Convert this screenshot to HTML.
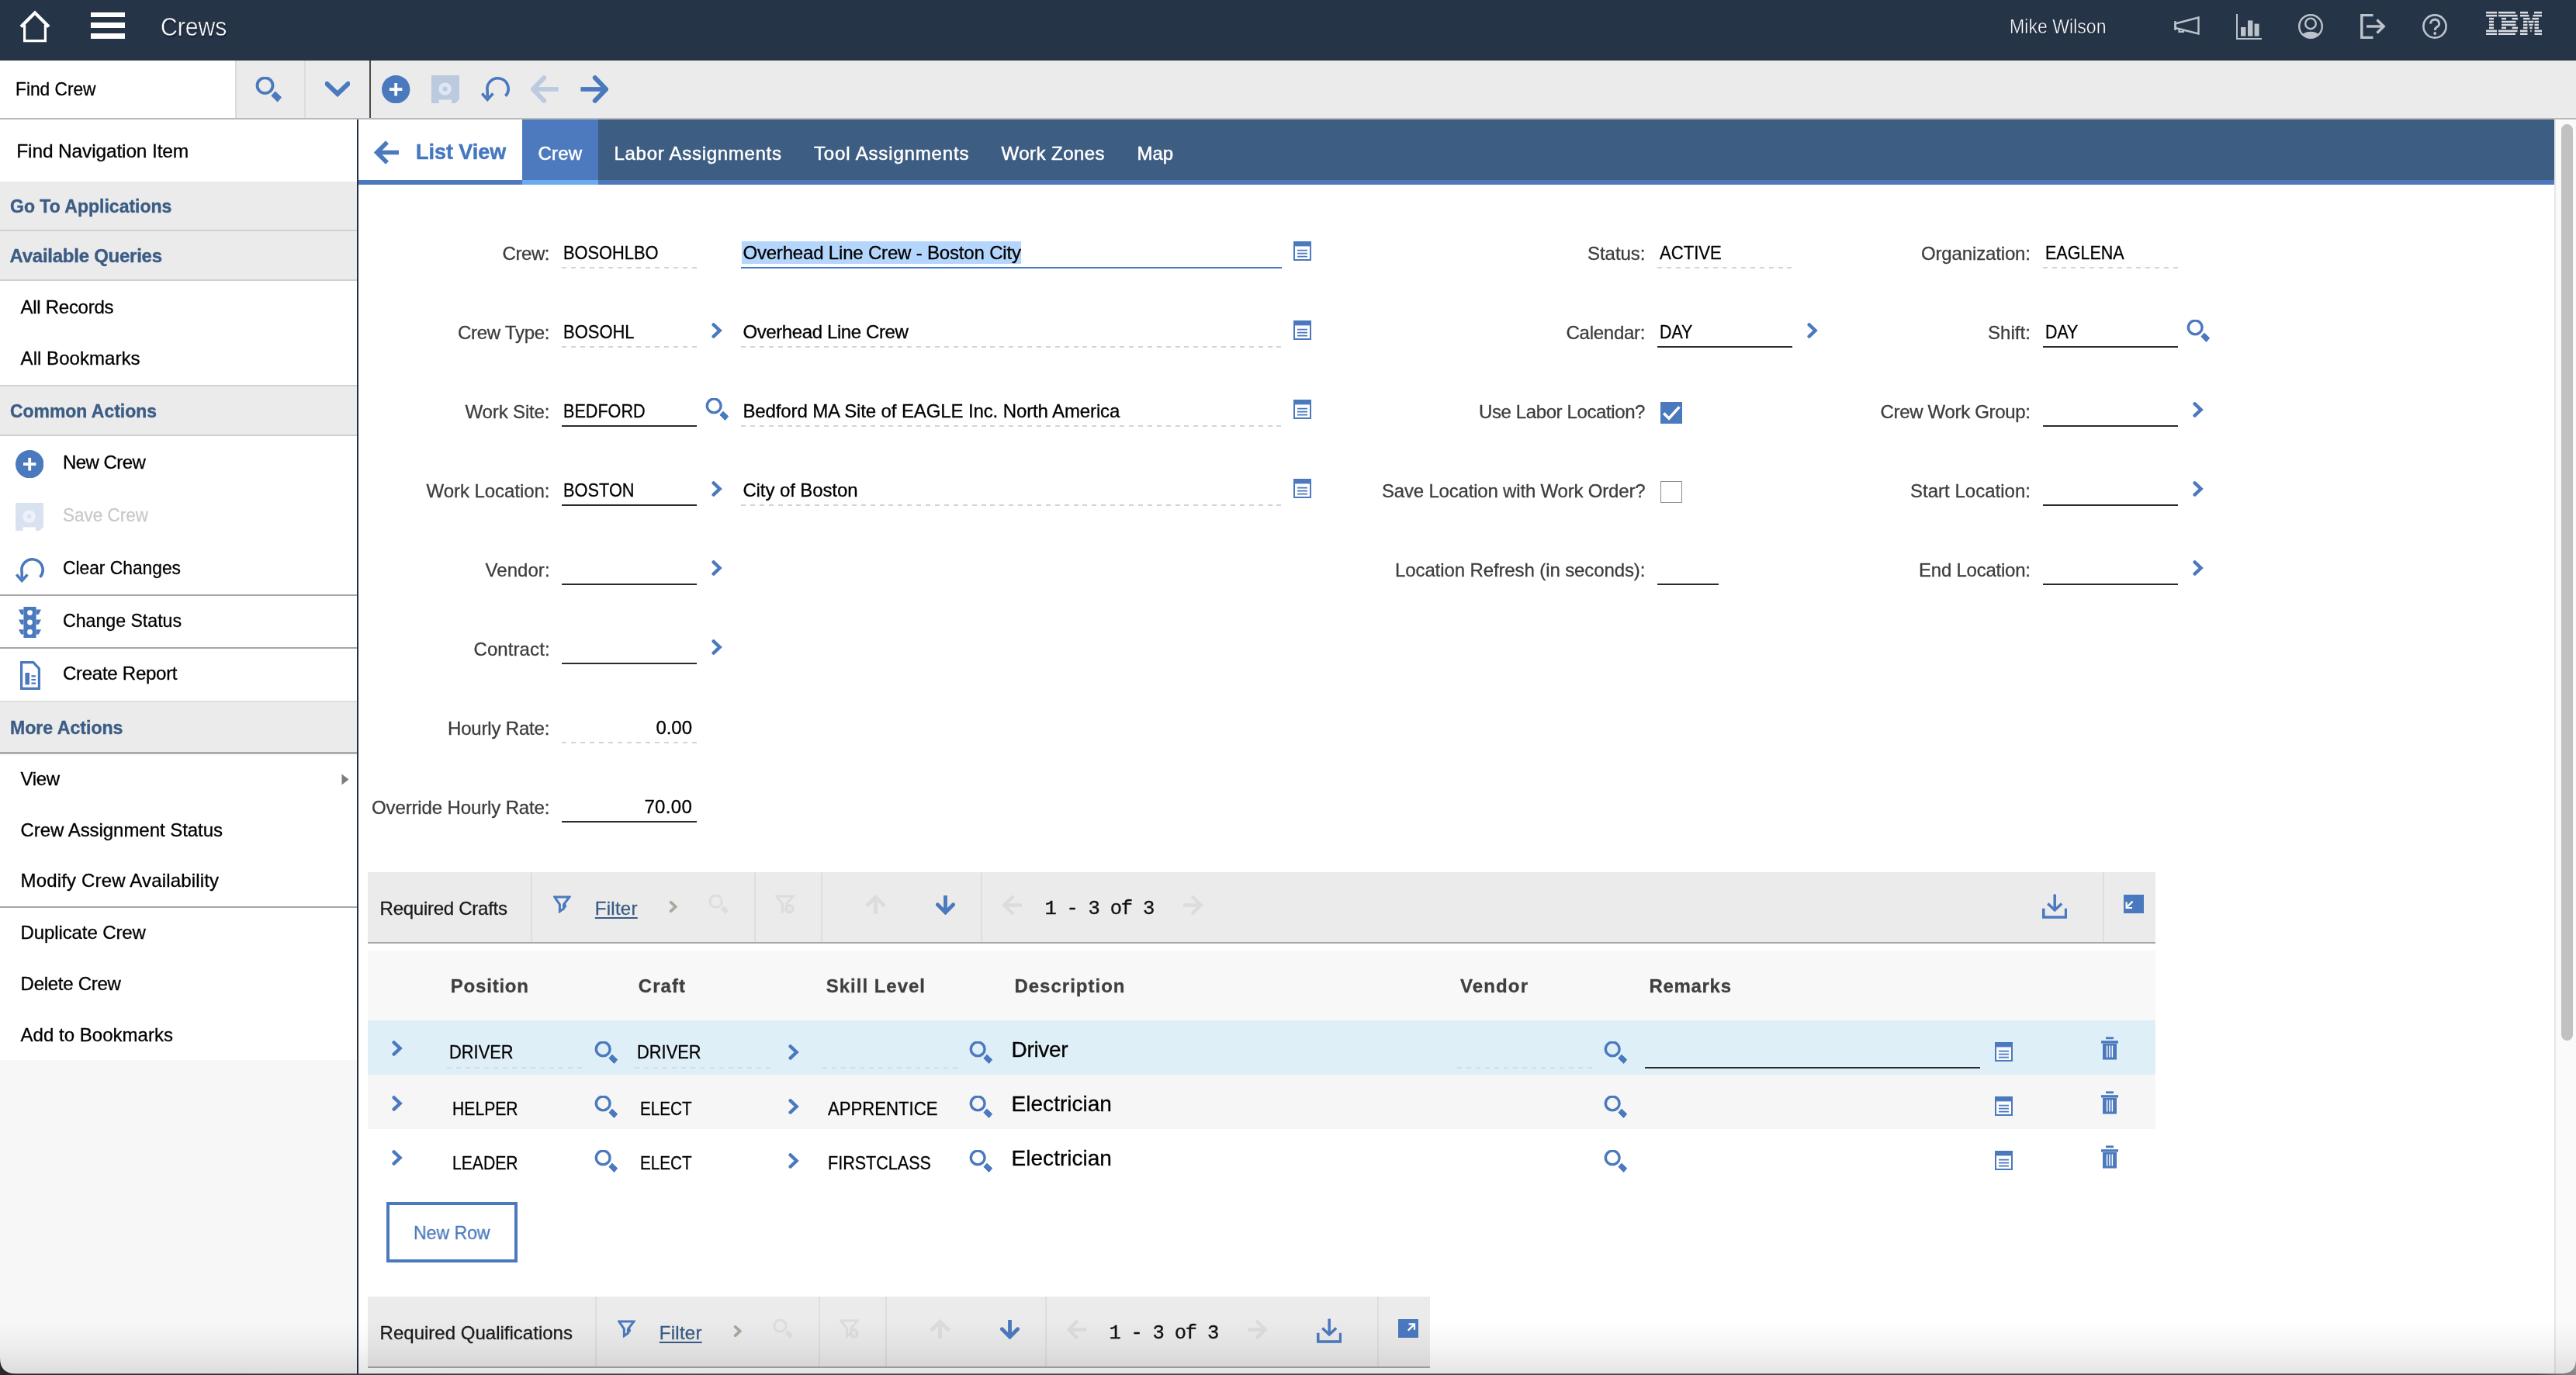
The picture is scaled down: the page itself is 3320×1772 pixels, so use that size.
<!DOCTYPE html>
<html><head><meta charset="utf-8"><title>Crews</title>
<style>
html,body{margin:0;padding:0;}
body{width:3320px;height:1772px;overflow:hidden;position:relative;background:#fff;
font-family:"Liberation Sans",sans-serif;}
#w{position:absolute;left:0;top:0;width:3320px;height:1772px;will-change:transform;}
#w>div,#w>span,#w>svg{position:absolute;}
#w>span{white-space:pre;line-height:1;display:block;-webkit-text-stroke-width:0.3px;}
</style></head><body><div id="w">
<div style="left:0px;top:0px;width:3320px;height:78px;background:#253447;"></div>
<svg style="left:25px;top:13px;" width="40" height="42" viewBox="0 0 40 42"><path d="M2 21.5 L20 3.5 L38 21.5" fill="none" stroke="#fff" stroke-width="4.2" stroke-linejoin="miter"/><path d="M6.6 19 V39.6 H33.4 V19" fill="none" stroke="#fff" stroke-width="3.2"/></svg>
<div style="left:117px;top:15.6px;width:44px;height:6.8px;background:#fff;"></div>
<div style="left:117px;top:29.4px;width:44px;height:6.8px;background:#fff;"></div>
<div style="left:117px;top:43.4px;width:44px;height:6.8px;background:#fff;"></div>
<span style="left:207.00px;top:17.42px;font-size:34px;font-weight:400;color:#fff;transform:scaleX(0.8870);transform-origin:0 0;-webkit-text-stroke:0.55px #253447;text-shadow:1px 2px 2px rgba(0,0,0,.35);">Crews</span>
<span style="left:2589.90px;top:21.61px;font-size:25.5px;font-weight:400;color:#fff;transform:scaleX(0.9065);transform-origin:0 0;-webkit-text-stroke:0.45px #253447;text-shadow:1px 1px 2px rgba(0,0,0,.35);">Mike Wilson</span>
<svg style="left:2802px;top:21px;" width="33" height="24" viewBox="0 0 33 24"><path d="M1.5 9.5 L31.5 1.5 V22.5 L1.5 15 Z" fill="none" stroke="#bdc3cb" stroke-width="2.4" stroke-linejoin="miter"/><path d="M6.5 16.2 V20 H12 V17.6" fill="none" stroke="#bdc3cb" stroke-width="2.2"/><path d="M1.5 6 V18" stroke="#bdc3cb" stroke-width="2.4"/></svg>
<svg style="left:2881.5px;top:17.6px;" width="33" height="33" viewBox="0 0 33 33"><path d="M1 0 V32 H33" fill="none" stroke="#bdc3cb" stroke-width="2"/><rect x="6" y="17" width="6.4" height="11.6" fill="#bdc3cb"/><rect x="15" y="8.4" width="6.4" height="20.2" fill="#bdc3cb"/><rect x="23.6" y="12.6" width="6" height="16" fill="#bdc3cb"/></svg>
<svg style="left:2962px;top:17.6px;" width="32" height="32" viewBox="0 0 32 32"><defs><clipPath id="uc"><circle cx="16" cy="16" r="14.6"/></clipPath></defs><circle cx="16" cy="16" r="14.8" fill="none" stroke="#bdc3cb" stroke-width="2.4"/><circle cx="16" cy="12.4" r="6.8" fill="none" stroke="#bdc3cb" stroke-width="2.4"/><ellipse cx="16" cy="30" rx="12.5" ry="7.2" fill="#bdc3cb" clip-path="url(#uc)"/></svg>
<svg style="left:3041.6px;top:18px;" width="33" height="32" viewBox="0 0 33 32"><path d="M16.5 1.6 H1.8 V30.4 H16.5" fill="none" stroke="#bdc3cb" stroke-width="3.4"/><path d="M8 16 H29" stroke="#bdc3cb" stroke-width="3.4" fill="none"/><path d="M21.5 7.5 L30.2 16 L21.5 24.5" stroke="#bdc3cb" stroke-width="3.4" fill="none"/></svg>
<svg style="left:3122px;top:17.6px;" width="32" height="32" viewBox="0 0 32 32"><circle cx="16" cy="16" r="14.6" fill="none" stroke="#bdc3cb" stroke-width="2.6"/><path d="M10.6 12.6 A5.5 5.2 0 1 1 18.4 17 Q16.2 18.4 16.2 21" fill="none" stroke="#bdc3cb" stroke-width="3"/><circle cx="16.2" cy="25" r="1.9" fill="#bdc3cb"/></svg>
<svg style="left:3204px;top:14.8px;" width="72" height="30.2" viewBox="0 0 72 30.2"><g fill="#d9dce0"><rect x="0" y="0.00" width="14" height="2.5"/><rect x="16" y="0.00" width="22" height="2.5"/><rect x="44" y="0.00" width="10.0" height="2.5"/><rect x="62" y="0.00" width="10.0" height="2.5"/><rect x="0" y="3.94" width="14" height="2.5"/><rect x="16" y="3.94" width="24.5" height="2.5"/><rect x="44" y="3.94" width="11.4" height="2.5"/><rect x="60.6" y="3.94" width="11.4" height="2.5"/><rect x="4" y="7.88" width="6" height="2.5"/><rect x="20" y="7.88" width="6" height="2.5"/><rect x="33.5" y="7.88" width="7.5" height="2.5"/><rect x="48" y="7.88" width="8.6" height="2.5"/><rect x="59.4" y="7.88" width="8.6" height="2.5"/><rect x="4" y="11.82" width="6" height="2.5"/><rect x="20" y="11.82" width="18.5" height="2.5"/><rect x="48" y="11.82" width="5.5" height="2.5"/><rect x="54.5" y="11.82" width="7.0" height="2.5"/><rect x="62.5" y="11.82" width="5.5" height="2.5"/><rect x="4" y="15.76" width="6" height="2.5"/><rect x="20" y="15.76" width="18.5" height="2.5"/><rect x="48" y="15.76" width="5.5" height="2.5"/><rect x="55.4" y="15.76" width="5.2" height="2.5"/><rect x="62.5" y="15.76" width="5.5" height="2.5"/><rect x="4" y="19.70" width="6" height="2.5"/><rect x="20" y="19.70" width="6" height="2.5"/><rect x="33.5" y="19.70" width="7.5" height="2.5"/><rect x="48" y="19.70" width="5.5" height="2.5"/><rect x="56.4" y="19.70" width="3.2" height="2.5"/><rect x="62.5" y="19.70" width="5.5" height="2.5"/><rect x="0" y="23.64" width="14" height="2.5"/><rect x="16" y="23.64" width="24.5" height="2.5"/><rect x="44" y="23.64" width="9.5" height="2.5"/><rect x="57.3" y="23.64" width="1.4" height="2.5"/><rect x="62.5" y="23.64" width="9.5" height="2.5"/><rect x="0" y="27.58" width="14" height="2.5"/><rect x="16" y="27.58" width="22" height="2.5"/><rect x="44" y="27.58" width="9.5" height="2.5"/><rect x="62.5" y="27.58" width="9.5" height="2.5"/></g></svg>
<div style="left:0px;top:78px;width:3320px;height:74px;background:#ebebeb;"></div>
<div style="left:0px;top:152px;width:3320px;height:2px;background:#b9b9b9;"></div>
<div style="left:0px;top:78px;width:303px;height:74px;background:#fff;"></div>
<div style="left:303px;top:78px;width:2px;height:74px;background:#dcdcdc;"></div>
<div style="left:392px;top:78px;width:2px;height:74px;background:#dcdcdc;"></div>
<div style="left:476px;top:78px;width:2.4px;height:74px;background:#4c4c4c;"></div>
<span style="left:20.40px;top:102.68px;font-size:24px;font-weight:400;color:#000;transform:scaleX(0.9466);transform-origin:0 0;">Find Crew</span>
<svg style="left:329.3px;top:99.4px;" width="33.6" height="32.480000000000004" viewBox="0 0 30 29"><circle cx="11.2" cy="10" r="8.9" fill="none" stroke="#4b79be" stroke-width="3.4"/><path d="M22.9 17.2 L29.7 23.6 L25.6 28.5 L18.9 21.8 Z" fill="#4b79be" stroke="#4b79be" stroke-width="1" stroke-linejoin="round"/></svg>
<svg style="left:419px;top:105px;" width="32" height="20" viewBox="0 0 32 20"><path d="M2.4 3 L16 16 L29.6 3" fill="none" stroke="#4b79be" stroke-width="6" stroke-linecap="round"/></svg>
<svg style="left:492.2px;top:96.8px;" width="36.4" height="36.4" viewBox="0 0 36.4 36.4"><circle cx="18.2" cy="18.2" r="18.2" fill="#4b79be"/><path d="M10.0 18.2 H26.4 M18.2 10.0 V26.4" stroke="#fff" stroke-width="3.8" fill="none"/></svg>
<svg style="left:556px;top:97px;" width="36" height="36" viewBox="0 0 36 36"><path d="M0 0 H36 V31 L31 36 H26 V31.5 H9.5 V36 H0 Z" fill="#bccadf"/><circle cx="17.6" cy="17.6" r="5.6" fill="none" stroke="#dfe6f1" stroke-width="5.2"/></svg>
<svg style="left:619.6px;top:98.4px;" width="37" height="33" viewBox="0 0 37 33"><path d="M8.2 27 V19 A13.6 13.6 0 1 1 31.4 25.8" fill="none" stroke="#4b79be" stroke-width="3.6"/><path d="M1.2 22.5 L8.2 30.4 L15.4 22.5" fill="none" stroke="#4b79be" stroke-width="3.6"/></svg>
<svg style="left:684.4px;top:96.9px;" width="36" height="36" viewBox="0 0 36 36"><g transform="translate(36,0) scale(-1,1)"><path d="M0.4 18 H31" stroke="#bccadf" stroke-width="5.8" fill="none"/><path d="M18.8 3.2 L33 18 L18.8 32.8" stroke="#bccadf" stroke-width="6.0" fill="none" stroke-linecap="round" stroke-linejoin="miter"/></g></svg>
<svg style="left:748px;top:96.9px;" width="36" height="36" viewBox="0 0 36 36"><g><path d="M0.4 18 H31" stroke="#4b79be" stroke-width="5.8" fill="none"/><path d="M18.8 3.2 L33 18 L18.8 32.8" stroke="#4b79be" stroke-width="6.0" fill="none" stroke-linecap="round" stroke-linejoin="miter"/></g></svg>
<div style="left:0px;top:154px;width:460px;height:1618px;background:#f7f7f7;"></div>
<div style="left:0px;top:154px;width:460px;height:1212px;background:#fff;"></div>
<div style="left:460px;top:154px;width:2.2px;height:1618px;background:#1f2f44;"></div>
<span style="left:21.30px;top:183.06px;font-size:24.5px;font-weight:400;color:#000;letter-spacing:-0.146px;">Find Navigation Item</span>
<div style="left:0px;top:234px;width:460px;height:62px;background:#ebebeb;"></div>
<div style="left:0px;top:296px;width:460px;height:2px;background:#d0d0d0;"></div>
<span style="left:12.60px;top:253.68px;font-size:24px;font-weight:700;color:#3b5c84;transform:scaleX(0.9590);transform-origin:0 0;-webkit-text-stroke:0.4px #3b5c84;">Go To Applications</span>
<div style="left:0px;top:298px;width:460px;height:62px;background:#ebebeb;"></div>
<div style="left:0px;top:360px;width:460px;height:2px;background:#d0d0d0;"></div>
<span style="left:12.60px;top:318.18px;font-size:24px;font-weight:700;color:#3b5c84;letter-spacing:-0.257px;-webkit-text-stroke:0.4px #3b5c84;">Available Queries</span>
<span style="left:26.60px;top:383.68px;font-size:24px;font-weight:400;color:#000;letter-spacing:-0.286px;">All Records</span>
<span style="left:26.60px;top:449.68px;font-size:24px;font-weight:400;color:#000;letter-spacing:0.045px;">All Bookmarks</span>
<div style="left:0px;top:496px;width:460px;height:2px;background:#d0d0d0;"></div>
<div style="left:0px;top:498px;width:460px;height:62px;background:#ebebeb;"></div>
<div style="left:0px;top:560px;width:460px;height:2px;background:#d0d0d0;"></div>
<span style="left:12.60px;top:518.18px;font-size:24px;font-weight:700;color:#3b5c84;transform:scaleX(0.9552);transform-origin:0 0;-webkit-text-stroke:0.4px #3b5c84;">Common Actions</span>
<svg style="left:19.599999999999998px;top:579.5999999999999px;" width="36.4" height="36.4" viewBox="0 0 36.4 36.4"><circle cx="18.2" cy="18.2" r="18.2" fill="#4b79be"/><path d="M10.0 18.2 H26.4 M18.2 10.0 V26.4" stroke="#fff" stroke-width="3.8" fill="none"/></svg>
<span style="left:81.00px;top:583.68px;font-size:24px;font-weight:400;color:#000;letter-spacing:-0.537px;">New Crew</span>
<svg style="left:19.8px;top:647.8px;" width="36" height="36" viewBox="0 0 36 36"><path d="M0 0 H36 V31 L31 36 H26 V31.5 H9.5 V36 H0 Z" fill="#d9e2f0"/><circle cx="17.6" cy="17.6" r="5.6" fill="none" stroke="#eef2f8" stroke-width="5.2"/></svg>
<span style="left:81.00px;top:652.18px;font-size:24px;font-weight:400;color:#c9c9c9;transform:scaleX(0.9363);transform-origin:0 0;">Save Crew</span>
<svg style="left:19.6px;top:718px;" width="37" height="33" viewBox="0 0 37 33"><path d="M8.2 27 V19 A13.6 13.6 0 1 1 31.4 25.8" fill="none" stroke="#4b79be" stroke-width="3.6"/><path d="M1.2 22.5 L8.2 30.4 L15.4 22.5" fill="none" stroke="#4b79be" stroke-width="3.6"/></svg>
<span style="left:81.00px;top:720.18px;font-size:24px;font-weight:400;color:#000;transform:scaleX(0.9495);transform-origin:0 0;">Clear Changes</span>
<div style="left:0px;top:765.6px;width:460px;height:2px;background:#a6a6a6;"></div>
<svg style="left:23.5px;top:782px;" width="29" height="40" viewBox="0 0 29 40"><rect x="6.4" y="0" width="16.2" height="40" fill="#4b79be"/><path d="M0 3.6 H6.4 V10 H3.2 Z M29 3.6 H22.6 V10 H25.8 Z" fill="#4b79be"/><path d="M0 16.4 H6.4 V22.8 H3.2 Z M29 16.4 H22.6 V22.8 H25.8 Z" fill="#4b79be"/><path d="M0 29.2 H6.4 V35.6 H3.2 Z M29 29.2 H22.6 V35.6 H25.8 Z" fill="#4b79be"/><circle cx="14.5" cy="7.6" r="3.4" fill="#fff"/><circle cx="14.5" cy="20" r="3.4" fill="#fff"/><circle cx="14.5" cy="32.4" r="3.4" fill="#fff"/></svg>
<span style="left:81.00px;top:788.18px;font-size:24px;font-weight:400;color:#000;transform:scaleX(0.9637);transform-origin:0 0;">Change Status</span>
<div style="left:0px;top:833.6px;width:460px;height:2px;background:#a6a6a6;"></div>
<svg style="left:26px;top:852px;" width="26" height="37" viewBox="0 0 26 37"><path d="M1.6 1.6 H17 L24.4 9.6 V35.4 H1.6 Z" fill="#fff" stroke="#4b79be" stroke-width="3.2" stroke-linejoin="miter"/><rect x="6.4" y="15" width="5.6" height="15.4" fill="#4b79be"/><path d="M14.4 19.4 H20 M14.4 24 H20 M14.4 28.6 H20" stroke="#4b79be" stroke-width="2.2"/></svg>
<span style="left:81.00px;top:856.18px;font-size:24px;font-weight:400;color:#000;letter-spacing:-0.268px;">Create Report</span>
<div style="left:0px;top:903px;width:460px;height:2px;background:#dedede;"></div>
<div style="left:0px;top:905px;width:460px;height:64px;background:#ebebeb;"></div>
<div style="left:0px;top:969px;width:460px;height:2.6px;background:linear-gradient(#a2a2a2,#b8b8b8);"></div>
<span style="left:12.60px;top:926.18px;font-size:24px;font-weight:700;color:#3b5c84;transform:scaleX(0.9624);transform-origin:0 0;-webkit-text-stroke:0.4px #3b5c84;">More Actions</span>
<span style="left:26.60px;top:991.68px;font-size:24px;font-weight:400;color:#000;letter-spacing:-0.400px;">View</span>
<svg style="left:440px;top:997px" width="10" height="15" viewBox="0 0 10 15"><path d="M0.5 0.5 L9.5 7.5 L0.5 14.5 Z" fill="#7d7d7d"/></svg>
<span style="left:26.60px;top:1057.68px;font-size:24px;font-weight:400;color:#000;letter-spacing:-0.051px;">Crew Assignment Status</span>
<span style="left:26.60px;top:1122.68px;font-size:24px;font-weight:400;color:#000;letter-spacing:0.163px;">Modify Crew Availability</span>
<div style="left:0px;top:1168px;width:460px;height:2px;background:#a6a6a6;"></div>
<span style="left:26.60px;top:1189.68px;font-size:24px;font-weight:400;color:#000;letter-spacing:-0.111px;">Duplicate Crew</span>
<span style="left:26.60px;top:1255.68px;font-size:24px;font-weight:400;color:#000;letter-spacing:-0.272px;">Delete Crew</span>
<span style="left:26.60px;top:1321.68px;font-size:24px;font-weight:400;color:#000;letter-spacing:0.021px;">Add to Bookmarks</span>
<div style="left:462px;top:154px;width:2830px;height:78px;background:#3d5d82;"></div>
<div style="left:462px;top:232px;width:2830px;height:6px;background:#4d78be;"></div>
<div style="left:462px;top:154px;width:211px;height:78px;background:#fff;"></div>
<div style="left:673px;top:154px;width:98px;height:78px;background:#4d7abf;"></div>
<div style="left:673px;top:232px;width:98px;height:6px;background:#6caaf0;"></div>
<svg style="left:482px;top:181px;" width="32" height="31" viewBox="0 0 32 31"><path d="M4 15.5 H32" stroke="#4b79be" stroke-width="5.6" fill="none"/><path d="M17 2.2 L3.8 15.5 L17 28.8" stroke="#4b79be" stroke-width="5.6" fill="none"/></svg>
<span style="left:535.90px;top:182.10px;font-size:28px;font-weight:700;color:#4677c1;transform:scaleX(0.9615);transform-origin:0 0;-webkit-text-stroke:0.5px #4677c1;">List View</span>
<span style="left:693.50px;top:186.18px;font-size:24px;font-weight:400;color:#fff;letter-spacing:0.153px;-webkit-text-stroke:0.5px #fff;">Crew</span>
<span style="left:791.50px;top:186.18px;font-size:24px;font-weight:400;color:#fff;letter-spacing:0.711px;-webkit-text-stroke:0.5px #fff;">Labor Assignments</span>
<span style="left:1049.00px;top:186.18px;font-size:24px;font-weight:400;color:#fff;letter-spacing:0.852px;-webkit-text-stroke:0.5px #fff;">Tool Assignments</span>
<span style="left:1290.50px;top:186.18px;font-size:24px;font-weight:400;color:#fff;letter-spacing:0.458px;-webkit-text-stroke:0.5px #fff;">Work Zones</span>
<span style="left:1465.50px;top:186.18px;font-size:24px;font-weight:400;color:#fff;letter-spacing:-0.090px;-webkit-text-stroke:0.5px #fff;">Map</span>
<div style="left:3292px;top:154px;width:28px;height:1618px;background:#fafafa;"></div>
<div style="left:3292px;top:154px;width:2px;height:1618px;background:#e6e6e6;"></div>
<div style="left:3300.5px;top:160px;width:15.5px;height:1181px;background:#c1c1c1;border-radius:8px;"></div>
<span style="left:647.50px;top:314.68px;font-size:24px;font-weight:400;color:#3d3d3d;letter-spacing:-0.410px;">Crew:</span>
<span style="left:590.00px;top:416.68px;font-size:24px;font-weight:400;color:#3d3d3d;letter-spacing:-0.273px;">Crew Type:</span>
<span style="left:599.50px;top:518.68px;font-size:24px;font-weight:400;color:#3d3d3d;letter-spacing:-0.142px;">Work Site:</span>
<span style="left:549.50px;top:620.68px;font-size:24px;font-weight:400;color:#3d3d3d;letter-spacing:-0.046px;">Work Location:</span>
<span style="left:625.50px;top:722.68px;font-size:24px;font-weight:400;color:#3d3d3d;letter-spacing:0.053px;">Vendor:</span>
<span style="left:610.50px;top:824.68px;font-size:24px;font-weight:400;color:#3d3d3d;letter-spacing:0.085px;">Contract:</span>
<span style="left:577.00px;top:926.68px;font-size:24px;font-weight:400;color:#3d3d3d;letter-spacing:-0.176px;">Hourly Rate:</span>
<span style="left:479.00px;top:1028.68px;font-size:24px;font-weight:400;color:#3d3d3d;letter-spacing:-0.129px;">Override Hourly Rate:</span>
<span style="left:2046.00px;top:314.68px;font-size:24px;font-weight:400;color:#3d3d3d;letter-spacing:-0.043px;">Status:</span>
<span style="left:2018.50px;top:416.68px;font-size:24px;font-weight:400;color:#3d3d3d;letter-spacing:-0.255px;">Calendar:</span>
<span style="left:1906.00px;top:518.68px;font-size:24px;font-weight:400;color:#3d3d3d;letter-spacing:-0.390px;">Use Labor Location?</span>
<span style="left:1781.00px;top:620.68px;font-size:24px;font-weight:400;color:#3d3d3d;letter-spacing:-0.190px;">Save Location with Work Order?</span>
<span style="left:1798.00px;top:722.68px;font-size:24px;font-weight:400;color:#3d3d3d;letter-spacing:-0.106px;">Location Refresh (in seconds):</span>
<span style="left:2476.00px;top:314.68px;font-size:24px;font-weight:400;color:#3d3d3d;letter-spacing:-0.150px;">Organization:</span>
<span style="left:2562.00px;top:416.68px;font-size:24px;font-weight:400;color:#3d3d3d;letter-spacing:0.056px;">Shift:</span>
<span style="left:2423.50px;top:518.68px;font-size:24px;font-weight:400;color:#3d3d3d;letter-spacing:-0.316px;">Crew Work Group:</span>
<span style="left:2462.00px;top:620.68px;font-size:24px;font-weight:400;color:#3d3d3d;letter-spacing:0.014px;">Start Location:</span>
<span style="left:2473.00px;top:722.68px;font-size:24px;font-weight:400;color:#3d3d3d;letter-spacing:-0.230px;">End Location:</span>
<span style="left:726.40px;top:313.68px;font-size:24px;font-weight:400;color:#000;transform:scaleX(0.9098);transform-origin:0 0;">BOSOHLBO</span>
<div style="left:724px;top:344px;width:174px;height:2px;background:repeating-linear-gradient(90deg,#d4d4d4 0 6px,transparent 6px 12.000px);"></div>
<span style="left:726.40px;top:415.68px;font-size:24px;font-weight:400;color:#000;transform:scaleX(0.9153);transform-origin:0 0;">BOSOHL</span>
<div style="left:724px;top:446px;width:174px;height:2px;background:repeating-linear-gradient(90deg,#d4d4d4 0 6px,transparent 6px 12.000px);"></div>
<span style="left:726.40px;top:517.68px;font-size:24px;font-weight:400;color:#000;transform:scaleX(0.8998);transform-origin:0 0;">BEDFORD</span>
<div style="left:724px;top:548px;width:174px;height:2px;background:#2b2b2b;"></div>
<span style="left:726.40px;top:619.68px;font-size:24px;font-weight:400;color:#000;transform:scaleX(0.9076);transform-origin:0 0;">BOSTON</span>
<div style="left:724px;top:650px;width:174px;height:2px;background:#2b2b2b;"></div>
<div style="left:724px;top:752px;width:174px;height:2px;background:#2b2b2b;"></div>
<div style="left:724px;top:854px;width:174px;height:2px;background:#2b2b2b;"></div>
<div style="left:724px;top:956px;width:174px;height:2px;background:repeating-linear-gradient(90deg,#d4d4d4 0 6px,transparent 6px 12.000px);"></div>
<div style="left:724px;top:1058px;width:174px;height:2px;background:#2b2b2b;"></div>
<span style="left:845.40px;top:925.68px;font-size:24px;font-weight:400;color:#000;letter-spacing:-0.027px;">0.00</span>
<span style="left:830.40px;top:1027.68px;font-size:24px;font-weight:400;color:#000;letter-spacing:0.370px;">70.00</span>
<div style="left:956px;top:311px;width:360px;height:29.4px;background:#b4d5fc;"></div>
<span style="left:957.40px;top:313.68px;font-size:24px;font-weight:400;color:#000;letter-spacing:-0.181px;">Overhead Line Crew - Boston City</span>
<div style="left:955px;top:344px;width:696.5px;height:2px;background:#4578c3;"></div>
<span style="left:957.40px;top:415.68px;font-size:24px;font-weight:400;color:#000;letter-spacing:-0.388px;">Overhead Line Crew</span>
<div style="left:955px;top:446px;width:696.5px;height:2px;background:repeating-linear-gradient(90deg,#d4d4d4 0 6px,transparent 6px 11.905px);"></div>
<span style="left:957.40px;top:517.68px;font-size:24px;font-weight:400;color:#000;letter-spacing:-0.118px;">Bedford MA Site of EAGLE Inc. North America</span>
<div style="left:955px;top:548px;width:696.5px;height:2px;background:repeating-linear-gradient(90deg,#d4d4d4 0 6px,transparent 6px 11.905px);"></div>
<span style="left:957.40px;top:619.68px;font-size:24px;font-weight:400;color:#000;letter-spacing:-0.100px;">City of Boston</span>
<div style="left:955px;top:650px;width:696.5px;height:2px;background:repeating-linear-gradient(90deg,#d4d4d4 0 6px,transparent 6px 11.905px);"></div>
<svg style="left:1666.5px;top:311px;" width="23" height="25" viewBox="0 0 23 25"><rect x="1" y="1" width="21" height="23" fill="#fff" stroke="#4b79be" stroke-width="2"/><rect x="0" y="0" width="23" height="6.4" fill="#4b79be"/><path d="M5 11.6 H18 M5 15.6 H18 M5 19.6 H18" stroke="#4b79be" stroke-width="1.8"/></svg>
<svg style="left:1666.5px;top:413px;" width="23" height="25" viewBox="0 0 23 25"><rect x="1" y="1" width="21" height="23" fill="#fff" stroke="#4b79be" stroke-width="2"/><rect x="0" y="0" width="23" height="6.4" fill="#4b79be"/><path d="M5 11.6 H18 M5 15.6 H18 M5 19.6 H18" stroke="#4b79be" stroke-width="1.8"/></svg>
<svg style="left:1666.5px;top:515px;" width="23" height="25" viewBox="0 0 23 25"><rect x="1" y="1" width="21" height="23" fill="#fff" stroke="#4b79be" stroke-width="2"/><rect x="0" y="0" width="23" height="6.4" fill="#4b79be"/><path d="M5 11.6 H18 M5 15.6 H18 M5 19.6 H18" stroke="#4b79be" stroke-width="1.8"/></svg>
<svg style="left:1666.5px;top:617px;" width="23" height="25" viewBox="0 0 23 25"><rect x="1" y="1" width="21" height="23" fill="#fff" stroke="#4b79be" stroke-width="2"/><rect x="0" y="0" width="23" height="6.4" fill="#4b79be"/><path d="M5 11.6 H18 M5 15.6 H18 M5 19.6 H18" stroke="#4b79be" stroke-width="1.8"/></svg>
<svg style="left:917.4px;top:415.6px;" width="14" height="20" viewBox="0 0 14 20"><path d="M2.6 2.4 L10.6 10 L2.6 17.6" fill="none" stroke="#4b79be" stroke-width="4.4" stroke-linejoin="miter" stroke-linecap="round"/></svg>
<svg style="left:909px;top:513.4px;" width="30.0" height="29.0" viewBox="0 0 30 29"><circle cx="11.2" cy="10" r="8.9" fill="none" stroke="#4b79be" stroke-width="3.4"/><path d="M22.9 17.2 L29.7 23.6 L25.6 28.5 L18.9 21.8 Z" fill="#4b79be" stroke="#4b79be" stroke-width="1" stroke-linejoin="round"/></svg>
<svg style="left:917.4px;top:619.6px;" width="14" height="20" viewBox="0 0 14 20"><path d="M2.6 2.4 L10.6 10 L2.6 17.6" fill="none" stroke="#4b79be" stroke-width="4.4" stroke-linejoin="miter" stroke-linecap="round"/></svg>
<svg style="left:917.4px;top:721.6px;" width="14" height="20" viewBox="0 0 14 20"><path d="M2.6 2.4 L10.6 10 L2.6 17.6" fill="none" stroke="#4b79be" stroke-width="4.4" stroke-linejoin="miter" stroke-linecap="round"/></svg>
<svg style="left:917.4px;top:823.6px;" width="14" height="20" viewBox="0 0 14 20"><path d="M2.6 2.4 L10.6 10 L2.6 17.6" fill="none" stroke="#4b79be" stroke-width="4.4" stroke-linejoin="miter" stroke-linecap="round"/></svg>
<span style="left:2138.80px;top:313.68px;font-size:24px;font-weight:400;color:#000;transform:scaleX(0.9199);transform-origin:0 0;">ACTIVE</span>
<div style="left:2136px;top:344px;width:173.5px;height:2px;background:repeating-linear-gradient(90deg,#d4d4d4 0 6px,transparent 6px 11.964px);"></div>
<span style="left:2138.80px;top:415.68px;font-size:24px;font-weight:400;color:#000;transform:scaleX(0.8880);transform-origin:0 0;">DAY</span>
<div style="left:2136px;top:446px;width:173.5px;height:2px;background:#2b2b2b;"></div>
<svg style="left:2329.4px;top:415.6px;" width="14" height="20" viewBox="0 0 14 20"><path d="M2.6 2.4 L10.6 10 L2.6 17.6" fill="none" stroke="#4b79be" stroke-width="4.4" stroke-linejoin="miter" stroke-linecap="round"/></svg>
<div style="left:2140px;top:518px;width:28px;height:28px;background:#4b79be;"></div>
<svg style="left:2140px;top:518px" width="28" height="28" viewBox="0 0 28 28"><path d="M4.2 14.4 L11 21.2 L24.4 6.4" fill="none" stroke="#fff" stroke-width="3.6"/></svg>
<div style="left:2140px;top:620px;width:28px;height:28px;background:#fff;box-sizing:border-box;border:1.6px solid #8a8a8a;"></div>
<div style="left:2136px;top:752px;width:79px;height:2px;background:#2b2b2b;"></div>
<span style="left:2635.80px;top:313.68px;font-size:24px;font-weight:400;color:#000;transform:scaleX(0.8968);transform-origin:0 0;">EAGLENA</span>
<div style="left:2633px;top:344px;width:174px;height:2px;background:repeating-linear-gradient(90deg,#d4d4d4 0 6px,transparent 6px 12.000px);"></div>
<span style="left:2635.80px;top:415.68px;font-size:24px;font-weight:400;color:#000;transform:scaleX(0.8880);transform-origin:0 0;">DAY</span>
<div style="left:2633px;top:446px;width:174px;height:2px;background:#2b2b2b;"></div>
<svg style="left:2818px;top:412px;" width="30.0" height="29.0" viewBox="0 0 30 29"><circle cx="11.2" cy="10" r="8.9" fill="none" stroke="#4b79be" stroke-width="3.4"/><path d="M22.9 17.2 L29.7 23.6 L25.6 28.5 L18.9 21.8 Z" fill="#4b79be" stroke="#4b79be" stroke-width="1" stroke-linejoin="round"/></svg>
<div style="left:2633px;top:548px;width:174px;height:2px;background:#2b2b2b;"></div>
<svg style="left:2826.4px;top:517.6px;" width="14" height="20" viewBox="0 0 14 20"><path d="M2.6 2.4 L10.6 10 L2.6 17.6" fill="none" stroke="#4b79be" stroke-width="4.4" stroke-linejoin="miter" stroke-linecap="round"/></svg>
<div style="left:2633px;top:650px;width:174px;height:2px;background:#2b2b2b;"></div>
<svg style="left:2826.4px;top:619.6px;" width="14" height="20" viewBox="0 0 14 20"><path d="M2.6 2.4 L10.6 10 L2.6 17.6" fill="none" stroke="#4b79be" stroke-width="4.4" stroke-linejoin="miter" stroke-linecap="round"/></svg>
<div style="left:2633px;top:752px;width:174px;height:2px;background:#2b2b2b;"></div>
<svg style="left:2826.4px;top:721.6px;" width="14" height="20" viewBox="0 0 14 20"><path d="M2.6 2.4 L10.6 10 L2.6 17.6" fill="none" stroke="#4b79be" stroke-width="4.4" stroke-linejoin="miter" stroke-linecap="round"/></svg>
<div style="left:474px;top:1124px;width:2304px;height:90px;background:#ebebeb;"></div>
<div style="left:474px;top:1213.6px;width:2304px;height:2px;background:#a9a9a9;"></div>
<span style="left:489.60px;top:1158.68px;font-size:24px;font-weight:400;color:#1a1a1a;letter-spacing:-0.266px;">Required Crafts</span>
<div style="left:684.4px;top:1124px;width:1.6px;height:89.6px;background:#dedede;"></div>
<div style="left:972.4px;top:1124px;width:1.6px;height:89.6px;background:#dedede;"></div>
<div style="left:1058.4px;top:1124px;width:1.6px;height:89.6px;background:#dedede;"></div>
<div style="left:1264.4px;top:1124px;width:1.6px;height:89.6px;background:#dedede;"></div>
<svg style="left:712.5px;top:1154.4px;" width="23" height="23" viewBox="0 0 23 23"><path d="M1.8 2 H21 L13.6 11.6 V17 L8.4 20.6 V11.6 Z" fill="none" stroke="#4b79be" stroke-width="3" stroke-linejoin="miter"/><circle cx="14.4" cy="13.4" r="2.6" fill="#4b79be"/></svg>
<span style="left:766.80px;top:1159.48px;font-size:24px;font-weight:400;color:#3b5c84;letter-spacing:0.264px;text-decoration:underline;text-decoration-thickness:1.6px;text-underline-offset:3px;">Filter</span>
<svg style="left:862.4px;top:1160.6px;" width="12" height="15" viewBox="0 0 14 20"><path d="M2.6 2.4 L10.6 10 L2.6 17.6" fill="none" stroke="#aaa79f" stroke-width="5" stroke-linejoin="miter" stroke-linecap="round"/></svg>
<svg style="left:913px;top:1153px;" width="25.8" height="24.94" viewBox="0 0 30 29"><circle cx="11.2" cy="10" r="8.9" fill="none" stroke="#dddddd" stroke-width="3.4"/><path d="M22.9 17.2 L29.7 23.6 L25.6 28.5 L18.9 21.8 Z" fill="#dddddd" stroke="#dddddd" stroke-width="1" stroke-linejoin="round"/></svg>
<svg style="left:999px;top:1153px;" width="26" height="25" viewBox="0 0 26 25"><path d="M1.8 2 H23 L14.6 12 V17.4 L9.4 22 V12 Z" fill="none" stroke="#dcdcdc" stroke-width="2.8" stroke-linejoin="miter"/><circle cx="18.6" cy="18.2" r="6.2" fill="#dcdcdc"/><path d="M16 15.6 L21.2 20.8 M21.2 15.6 L16 20.8" stroke="#ebebeb" stroke-width="1.6"/></svg>
<svg style="left:1115.5px;top:1153px;" width="25" height="25" viewBox="0 0 25 25"><g transform="translate(0,25) scale(1,-1)"><path d="M12.5 0.4 V21" stroke="#dcdcdc" stroke-width="4.8" fill="none" stroke-linecap="round"/><path d="M2.4 11.8 L12.5 22 L22.6 11.8" stroke="#dcdcdc" stroke-width="4.8" fill="none" stroke-linecap="round"/></g></svg>
<svg style="left:1205.5px;top:1153.6px;" width="25" height="25" viewBox="0 0 25 25"><g><path d="M12.5 0.4 V21" stroke="#4b79be" stroke-width="4.8" fill="none" stroke-linecap="round"/><path d="M2.4 11.8 L12.5 22 L22.6 11.8" stroke="#4b79be" stroke-width="4.8" fill="none" stroke-linecap="round"/></g></svg>
<svg style="left:1291.8px;top:1154px;" width="25" height="25" viewBox="0 0 25 25"><g transform="translate(25,0) scale(-1,1)"><path d="M0.4 12.5 H21" stroke="#dcdcdc" stroke-width="4.4" fill="none" stroke-linecap="round"/><path d="M12.4 2.2 L22.6 12.5 L12.4 22.8" stroke="#dcdcdc" stroke-width="4.4" fill="none" stroke-linecap="round"/></g></svg>
<span style="left:1346.40px;top:1159.45px;font-size:25.5px;font-weight:400;color:#111;letter-spacing:-1.244px;-webkit-text-stroke:0.35px #111;font-family:'Liberation Mono',monospace;">1 - 3 of 3</span>
<svg style="left:1525px;top:1154px;" width="25" height="25" viewBox="0 0 25 25"><g><path d="M0.4 12.5 H21" stroke="#dcdcdc" stroke-width="4.4" fill="none" stroke-linecap="round"/><path d="M12.4 2.2 L22.6 12.5 L12.4 22.8" stroke="#dcdcdc" stroke-width="4.4" fill="none" stroke-linecap="round"/></g></svg>
<div style="left:2710.0px;top:1124px;width:1.6px;height:89.6px;background:#dedede;"></div>
<svg style="left:2631.9px;top:1151.8px;" width="32.4" height="32" viewBox="0 0 33 33" preserveAspectRatio="none"><path d="M16.5 0.5 V21" stroke="#4b79be" stroke-width="3.6" fill="none"/><path d="M7.4 12.8 L16.5 21.6 L25.6 12.8" stroke="#4b79be" stroke-width="3.6" fill="none"/><path d="M1.8 19.4 V31 H31.2 V19.4" stroke="#4b79be" stroke-width="3.6" fill="none"/></svg>
<svg style="left:2737px;top:1153px;" width="26" height="24" viewBox="0 0 26 24"><rect x="0" y="0" width="26" height="24" fill="#4b79be"/><path d="M11.6 8.6 L4.6 15.6" stroke="#fff" stroke-width="2.2"/><path d="M3.6 9.6 V17 H11" fill="none" stroke="#fff" stroke-width="2.2"/></svg>
<div style="left:474px;top:1671px;width:1369px;height:90px;background:#ebebeb;"></div>
<div style="left:474px;top:1760.6px;width:1369px;height:2px;background:#a9a9a9;"></div>
<span style="left:489.60px;top:1705.68px;font-size:24px;font-weight:400;color:#1a1a1a;letter-spacing:0.011px;">Required Qualifications</span>
<div style="left:767.4px;top:1671px;width:1.6px;height:89.6px;background:#dedede;"></div>
<div style="left:1055.4px;top:1671px;width:1.6px;height:89.6px;background:#dedede;"></div>
<div style="left:1141.4px;top:1671px;width:1.6px;height:89.6px;background:#dedede;"></div>
<div style="left:1347.4px;top:1671px;width:1.6px;height:89.6px;background:#dedede;"></div>
<svg style="left:795.5px;top:1701.4px;" width="23" height="23" viewBox="0 0 23 23"><path d="M1.8 2 H21 L13.6 11.6 V17 L8.4 20.6 V11.6 Z" fill="none" stroke="#4b79be" stroke-width="3" stroke-linejoin="miter"/><circle cx="14.4" cy="13.4" r="2.6" fill="#4b79be"/></svg>
<span style="left:849.80px;top:1706.48px;font-size:24px;font-weight:400;color:#3b5c84;letter-spacing:0.264px;text-decoration:underline;text-decoration-thickness:1.6px;text-underline-offset:3px;">Filter</span>
<svg style="left:945.4px;top:1707.6px;" width="12" height="15" viewBox="0 0 14 20"><path d="M2.6 2.4 L10.6 10 L2.6 17.6" fill="none" stroke="#aaa79f" stroke-width="5" stroke-linejoin="miter" stroke-linecap="round"/></svg>
<svg style="left:996px;top:1700px;" width="25.8" height="24.94" viewBox="0 0 30 29"><circle cx="11.2" cy="10" r="8.9" fill="none" stroke="#dddddd" stroke-width="3.4"/><path d="M22.9 17.2 L29.7 23.6 L25.6 28.5 L18.9 21.8 Z" fill="#dddddd" stroke="#dddddd" stroke-width="1" stroke-linejoin="round"/></svg>
<svg style="left:1082px;top:1700px;" width="26" height="25" viewBox="0 0 26 25"><path d="M1.8 2 H23 L14.6 12 V17.4 L9.4 22 V12 Z" fill="none" stroke="#dcdcdc" stroke-width="2.8" stroke-linejoin="miter"/><circle cx="18.6" cy="18.2" r="6.2" fill="#dcdcdc"/><path d="M16 15.6 L21.2 20.8 M21.2 15.6 L16 20.8" stroke="#ebebeb" stroke-width="1.6"/></svg>
<svg style="left:1198.5px;top:1700px;" width="25" height="25" viewBox="0 0 25 25"><g transform="translate(0,25) scale(1,-1)"><path d="M12.5 0.4 V21" stroke="#dcdcdc" stroke-width="4.8" fill="none" stroke-linecap="round"/><path d="M2.4 11.8 L12.5 22 L22.6 11.8" stroke="#dcdcdc" stroke-width="4.8" fill="none" stroke-linecap="round"/></g></svg>
<svg style="left:1288.5px;top:1700.6px;" width="25" height="25" viewBox="0 0 25 25"><g><path d="M12.5 0.4 V21" stroke="#4b79be" stroke-width="4.8" fill="none" stroke-linecap="round"/><path d="M2.4 11.8 L12.5 22 L22.6 11.8" stroke="#4b79be" stroke-width="4.8" fill="none" stroke-linecap="round"/></g></svg>
<svg style="left:1374.8px;top:1701px;" width="25" height="25" viewBox="0 0 25 25"><g transform="translate(25,0) scale(-1,1)"><path d="M0.4 12.5 H21" stroke="#dcdcdc" stroke-width="4.4" fill="none" stroke-linecap="round"/><path d="M12.4 2.2 L22.6 12.5 L12.4 22.8" stroke="#dcdcdc" stroke-width="4.4" fill="none" stroke-linecap="round"/></g></svg>
<span style="left:1429.40px;top:1706.45px;font-size:25.5px;font-weight:400;color:#111;letter-spacing:-1.244px;-webkit-text-stroke:0.35px #111;font-family:'Liberation Mono',monospace;">1 - 3 of 3</span>
<svg style="left:1608px;top:1701px;" width="25" height="25" viewBox="0 0 25 25"><g><path d="M0.4 12.5 H21" stroke="#dcdcdc" stroke-width="4.4" fill="none" stroke-linecap="round"/><path d="M12.4 2.2 L22.6 12.5 L12.4 22.8" stroke="#dcdcdc" stroke-width="4.4" fill="none" stroke-linecap="round"/></g></svg>
<div style="left:1775.4px;top:1671px;width:1.6px;height:89.6px;background:#dedede;"></div>
<svg style="left:1696.8999999999999px;top:1698.8px;" width="32.4" height="32" viewBox="0 0 33 33" preserveAspectRatio="none"><path d="M16.5 0.5 V21" stroke="#4b79be" stroke-width="3.6" fill="none"/><path d="M7.4 12.8 L16.5 21.6 L25.6 12.8" stroke="#4b79be" stroke-width="3.6" fill="none"/><path d="M1.8 19.4 V31 H31.2 V19.4" stroke="#4b79be" stroke-width="3.6" fill="none"/></svg>
<svg style="left:1802px;top:1700px;" width="26" height="24" viewBox="0 0 26 24"><rect x="0" y="0" width="26" height="24" fill="#4b79be"/><path d="M12.8 14.6 L19.8 7.6" stroke="#fff" stroke-width="2.2"/><path d="M13.6 6.4 H21 V13.8" fill="none" stroke="#fff" stroke-width="2.2"/></svg>
<div style="left:474px;top:1225px;width:2304px;height:90px;background:#f8f8f8;"></div>
<span style="left:580.80px;top:1258.68px;font-size:24px;font-weight:700;color:#3f3f3f;letter-spacing:0.789px;">Position</span>
<span style="left:822.80px;top:1258.68px;font-size:24px;font-weight:700;color:#3f3f3f;letter-spacing:1.040px;">Craft</span>
<span style="left:1064.80px;top:1258.68px;font-size:24px;font-weight:700;color:#3f3f3f;letter-spacing:0.984px;">Skill Level</span>
<span style="left:1307.40px;top:1258.68px;font-size:24px;font-weight:700;color:#3f3f3f;letter-spacing:1.010px;">Description</span>
<span style="left:1882.00px;top:1258.68px;font-size:24px;font-weight:700;color:#3f3f3f;letter-spacing:1.128px;">Vendor</span>
<span style="left:2125.40px;top:1258.68px;font-size:24px;font-weight:700;color:#3f3f3f;letter-spacing:0.700px;">Remarks</span>
<div style="left:474px;top:1315px;width:2304px;height:70px;background:#dfeff8;"></div>
<div style="left:474px;top:1385px;width:2304px;height:70px;background:#f6f6f6;"></div>
<svg style="left:504.8px;top:1341.4px;" width="14" height="20" viewBox="0 0 14 20"><path d="M2.6 2.4 L10.6 10 L2.6 17.6" fill="none" stroke="#4b79be" stroke-width="4.4" stroke-linejoin="miter" stroke-linecap="round"/></svg>
<span style="left:579.40px;top:1344.28px;font-size:24px;font-weight:400;color:#000;transform:scaleX(0.9105);transform-origin:0 0;">DRIVER</span>
<svg style="left:766.4px;top:1341.6px;" width="30.0" height="29.0" viewBox="0 0 30 29"><circle cx="11.2" cy="10" r="8.9" fill="none" stroke="#4b79be" stroke-width="3.4"/><path d="M22.9 17.2 L29.7 23.6 L25.6 28.5 L18.9 21.8 Z" fill="#4b79be" stroke="#4b79be" stroke-width="1" stroke-linejoin="round"/></svg>
<span style="left:821.40px;top:1344.28px;font-size:24px;font-weight:400;color:#000;transform:scaleX(0.9105);transform-origin:0 0;">DRIVER</span>
<svg style="left:1016px;top:1346px;" width="14" height="20" viewBox="0 0 14 20"><path d="M2.6 2.4 L10.6 10 L2.6 17.6" fill="none" stroke="#4b79be" stroke-width="4.4" stroke-linejoin="miter" stroke-linecap="round"/></svg>
<svg style="left:1249.4px;top:1341.6px;" width="30.0" height="29.0" viewBox="0 0 30 29"><circle cx="11.2" cy="10" r="8.9" fill="none" stroke="#4b79be" stroke-width="3.4"/><path d="M22.9 17.2 L29.7 23.6 L25.6 28.5 L18.9 21.8 Z" fill="#4b79be" stroke="#4b79be" stroke-width="1" stroke-linejoin="round"/></svg>
<span style="left:1303.60px;top:1339.10px;font-size:28px;font-weight:400;color:#000;letter-spacing:-0.344px;">Driver</span>
<svg style="left:2067px;top:1341.6px;" width="30.0" height="29.0" viewBox="0 0 30 29"><circle cx="11.2" cy="10" r="8.9" fill="none" stroke="#4b79be" stroke-width="3.4"/><path d="M22.9 17.2 L29.7 23.6 L25.6 28.5 L18.9 21.8 Z" fill="#4b79be" stroke="#4b79be" stroke-width="1" stroke-linejoin="round"/></svg>
<svg style="left:2570.5px;top:1343px;" width="23" height="25" viewBox="0 0 23 25"><rect x="1" y="1" width="21" height="23" fill="rgba(255,255,255,.7)" stroke="#4b79be" stroke-width="2"/><rect x="0" y="0" width="23" height="6.4" fill="#4b79be"/><path d="M5 11.6 H18 M5 15.6 H18 M5 19.6 H18" stroke="#4b79be" stroke-width="1.8"/></svg>
<svg style="left:2708px;top:1336px;" width="22" height="30" viewBox="0 0 22 30"><rect x="6" y="0.4" width="10" height="2.8" fill="#4b79be"/><rect x="0" y="5.2" width="22" height="3.4" fill="#4b79be"/><path d="M2 9 H20 V29.6 H2 Z" fill="#4b79be"/><path d="M7.6 11.4 V26.4 M11 11.4 V26.4 M14.4 11.4 V26.4" stroke="#fff" stroke-width="1.5"/></svg>
<svg style="left:504.8px;top:1412.0px;" width="14" height="20" viewBox="0 0 14 20"><path d="M2.6 2.4 L10.6 10 L2.6 17.6" fill="none" stroke="#4b79be" stroke-width="4.4" stroke-linejoin="miter" stroke-linecap="round"/></svg>
<span style="left:583.40px;top:1416.68px;font-size:24px;font-weight:400;color:#000;transform:scaleX(0.8813);transform-origin:0 0;">HELPER</span>
<svg style="left:766.4px;top:1411.6px;" width="30.0" height="29.0" viewBox="0 0 30 29"><circle cx="11.2" cy="10" r="8.9" fill="none" stroke="#4b79be" stroke-width="3.4"/><path d="M22.9 17.2 L29.7 23.6 L25.6 28.5 L18.9 21.8 Z" fill="#4b79be" stroke="#4b79be" stroke-width="1" stroke-linejoin="round"/></svg>
<span style="left:825.40px;top:1416.68px;font-size:24px;font-weight:400;color:#000;transform:scaleX(0.8605);transform-origin:0 0;">ELECT</span>
<svg style="left:1016px;top:1416px;" width="14" height="20" viewBox="0 0 14 20"><path d="M2.6 2.4 L10.6 10 L2.6 17.6" fill="none" stroke="#4b79be" stroke-width="4.4" stroke-linejoin="miter" stroke-linecap="round"/></svg>
<span style="left:1067.00px;top:1416.68px;font-size:24px;font-weight:400;color:#000;transform:scaleX(0.9220);transform-origin:0 0;">APPRENTICE</span>
<svg style="left:1249.4px;top:1411.6px;" width="30.0" height="29.0" viewBox="0 0 30 29"><circle cx="11.2" cy="10" r="8.9" fill="none" stroke="#4b79be" stroke-width="3.4"/><path d="M22.9 17.2 L29.7 23.6 L25.6 28.5 L18.9 21.8 Z" fill="#4b79be" stroke="#4b79be" stroke-width="1" stroke-linejoin="round"/></svg>
<span style="left:1303.60px;top:1409.30px;font-size:28px;font-weight:400;color:#000;letter-spacing:0.018px;">Electrician</span>
<svg style="left:2067px;top:1411.6px;" width="30.0" height="29.0" viewBox="0 0 30 29"><circle cx="11.2" cy="10" r="8.9" fill="none" stroke="#4b79be" stroke-width="3.4"/><path d="M22.9 17.2 L29.7 23.6 L25.6 28.5 L18.9 21.8 Z" fill="#4b79be" stroke="#4b79be" stroke-width="1" stroke-linejoin="round"/></svg>
<svg style="left:2570.5px;top:1413px;" width="23" height="25" viewBox="0 0 23 25"><rect x="1" y="1" width="21" height="23" fill="rgba(255,255,255,.7)" stroke="#4b79be" stroke-width="2"/><rect x="0" y="0" width="23" height="6.4" fill="#4b79be"/><path d="M5 11.6 H18 M5 15.6 H18 M5 19.6 H18" stroke="#4b79be" stroke-width="1.8"/></svg>
<svg style="left:2708px;top:1406px;" width="22" height="30" viewBox="0 0 22 30"><rect x="6" y="0.4" width="10" height="2.8" fill="#4b79be"/><rect x="0" y="5.2" width="22" height="3.4" fill="#4b79be"/><path d="M2 9 H20 V29.6 H2 Z" fill="#4b79be"/><path d="M7.6 11.4 V26.4 M11 11.4 V26.4 M14.4 11.4 V26.4" stroke="#fff" stroke-width="1.5"/></svg>
<svg style="left:504.8px;top:1482.0px;" width="14" height="20" viewBox="0 0 14 20"><path d="M2.6 2.4 L10.6 10 L2.6 17.6" fill="none" stroke="#4b79be" stroke-width="4.4" stroke-linejoin="miter" stroke-linecap="round"/></svg>
<span style="left:583.40px;top:1486.68px;font-size:24px;font-weight:400;color:#000;transform:scaleX(0.8813);transform-origin:0 0;">LEADER</span>
<svg style="left:766.4px;top:1481.6px;" width="30.0" height="29.0" viewBox="0 0 30 29"><circle cx="11.2" cy="10" r="8.9" fill="none" stroke="#4b79be" stroke-width="3.4"/><path d="M22.9 17.2 L29.7 23.6 L25.6 28.5 L18.9 21.8 Z" fill="#4b79be" stroke="#4b79be" stroke-width="1" stroke-linejoin="round"/></svg>
<span style="left:825.40px;top:1486.68px;font-size:24px;font-weight:400;color:#000;transform:scaleX(0.8605);transform-origin:0 0;">ELECT</span>
<svg style="left:1016px;top:1486px;" width="14" height="20" viewBox="0 0 14 20"><path d="M2.6 2.4 L10.6 10 L2.6 17.6" fill="none" stroke="#4b79be" stroke-width="4.4" stroke-linejoin="miter" stroke-linecap="round"/></svg>
<span style="left:1067.00px;top:1486.68px;font-size:24px;font-weight:400;color:#000;transform:scaleX(0.8982);transform-origin:0 0;">FIRSTCLASS</span>
<svg style="left:1249.4px;top:1481.6px;" width="30.0" height="29.0" viewBox="0 0 30 29"><circle cx="11.2" cy="10" r="8.9" fill="none" stroke="#4b79be" stroke-width="3.4"/><path d="M22.9 17.2 L29.7 23.6 L25.6 28.5 L18.9 21.8 Z" fill="#4b79be" stroke="#4b79be" stroke-width="1" stroke-linejoin="round"/></svg>
<span style="left:1303.60px;top:1479.30px;font-size:28px;font-weight:400;color:#000;letter-spacing:0.018px;">Electrician</span>
<svg style="left:2067px;top:1481.6px;" width="30.0" height="29.0" viewBox="0 0 30 29"><circle cx="11.2" cy="10" r="8.9" fill="none" stroke="#4b79be" stroke-width="3.4"/><path d="M22.9 17.2 L29.7 23.6 L25.6 28.5 L18.9 21.8 Z" fill="#4b79be" stroke="#4b79be" stroke-width="1" stroke-linejoin="round"/></svg>
<svg style="left:2570.5px;top:1483px;" width="23" height="25" viewBox="0 0 23 25"><rect x="1" y="1" width="21" height="23" fill="rgba(255,255,255,.7)" stroke="#4b79be" stroke-width="2"/><rect x="0" y="0" width="23" height="6.4" fill="#4b79be"/><path d="M5 11.6 H18 M5 15.6 H18 M5 19.6 H18" stroke="#4b79be" stroke-width="1.8"/></svg>
<svg style="left:2708px;top:1476px;" width="22" height="30" viewBox="0 0 22 30"><rect x="6" y="0.4" width="10" height="2.8" fill="#4b79be"/><rect x="0" y="5.2" width="22" height="3.4" fill="#4b79be"/><path d="M2 9 H20 V29.6 H2 Z" fill="#4b79be"/><path d="M7.6 11.4 V26.4 M11 11.4 V26.4 M14.4 11.4 V26.4" stroke="#fff" stroke-width="1.5"/></svg>
<div style="left:576px;top:1375px;width:174px;height:2px;background:repeating-linear-gradient(90deg,#d3dde3 0 6px,transparent 6px 12.000px);"></div>
<div style="left:818px;top:1375px;width:175px;height:2px;background:repeating-linear-gradient(90deg,#d3dde3 0 6px,transparent 6px 12.071px);"></div>
<div style="left:1060px;top:1375px;width:174px;height:2px;background:repeating-linear-gradient(90deg,#d3dde3 0 6px,transparent 6px 12.000px);"></div>
<div style="left:1878px;top:1375px;width:174px;height:2px;background:repeating-linear-gradient(90deg,#d3dde3 0 6px,transparent 6px 12.000px);"></div>
<div style="left:2120px;top:1375px;width:432px;height:2px;background:#2b2b2b;"></div>
<div style="left:498px;top:1549px;width:169px;height:78px;background:#fff;box-sizing:border-box;border:4px solid #4b79be;"></div>
<span style="left:533.40px;top:1576.68px;font-size:24px;font-weight:400;color:#4b79be;transform:scaleX(0.9599);transform-origin:0 0;">New Row</span>
<div style="left:0;top:1700px;width:3320px;height:72px;background:linear-gradient(rgba(0,0,0,0),rgba(0,0,0,.03) 45%,rgba(0,0,0,.105));"></div>
<svg style="left:0;top:1742px" width="3320" height="30" viewBox="0 0 3320 30"><defs><linearGradient id="bg" x1="0" x2="1" y1="0" y2="0"><stop offset="0" stop-color="#2b2830"/><stop offset="0.3" stop-color="#454547"/><stop offset="0.985" stop-color="#454547"/><stop offset="1" stop-color="#8c8c8c"/></linearGradient></defs><path d="M0 0 V30 H3320 V0 V10 Q3320 28.2 3301 28.2 H20 Q0 28.2 0 8 Z" fill="url(#bg)"/></svg>
</div></body></html>
